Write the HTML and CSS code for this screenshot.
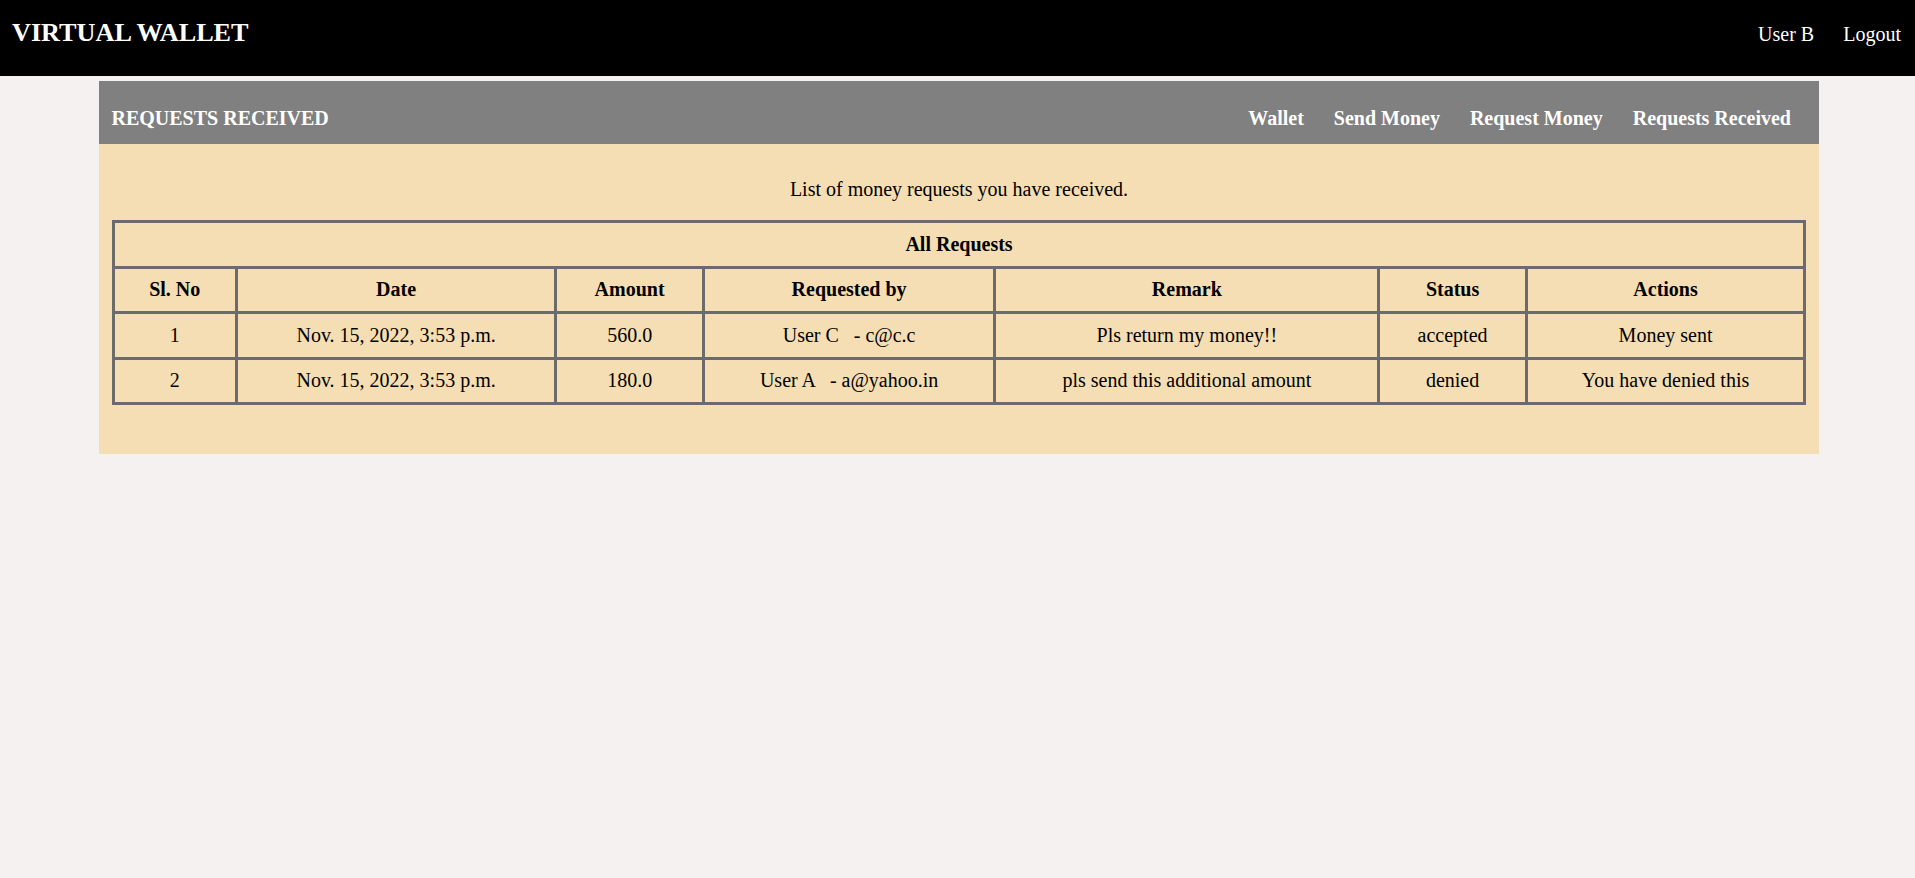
FILE: index.html
```html
<!DOCTYPE html>
<html lang="en">
<head>
<meta charset="utf-8">
<title>Virtual Wallet - Requests Received</title>
<link rel="stylesheet" href="styles.css">
</head>
<body>
<header class="topbar">
  <div class="brand">VIRTUAL WALLET</div>
  <nav class="user-nav">
    <a class="user-link" href="#">User B</a>
    <a class="user-link" href="#">Logout</a>
  </nav>
</header>
<main class="panel">
  <div class="panel-bar">
    <div class="panel-title">REQUESTS RECEIVED</div>
    <nav class="panel-nav">
      <a class="panel-link" href="#">Wallet</a>
      <a class="panel-link" href="#">Send Money</a>
      <a class="panel-link" href="#">Request Money</a>
      <a class="panel-link" href="#">Requests Received</a>
    </nav>
  </div>
  <div class="panel-body">
    <p class="intro">List of money requests you have received.</p>
    <table class="req-table">
      <colgroup>
        <col class="c-sl">
        <col class="c-date">
        <col class="c-amt">
        <col class="c-by">
        <col class="c-remark">
        <col class="c-status">
        <col class="c-actions">
      </colgroup>
      <thead>
        <tr><th colspan="7">All Requests</th></tr>
        <tr>
          <th>Sl. No</th>
          <th>Date</th>
          <th>Amount</th>
          <th>Requested by</th>
          <th>Remark</th>
          <th>Status</th>
          <th>Actions</th>
        </tr>
      </thead>
      <tbody>
        <tr>
          <td>1</td>
          <td>Nov. 15, 2022, 3:53 p.m.</td>
          <td>560.0</td>
          <td>User C &nbsp; - c@c.c</td>
          <td>Pls return my money!!</td>
          <td>accepted</td>
          <td>Money sent</td>
        </tr>
        <tr>
          <td>2</td>
          <td>Nov. 15, 2022, 3:53 p.m.</td>
          <td>180.0</td>
          <td>User A &nbsp; - a@yahoo.in</td>
          <td>pls send this additional amount</td>
          <td>denied</td>
          <td>You have denied this</td>
        </tr>
      </tbody>
    </table>
  </div>
</main>
</body>
</html>
```
FILE: styles.css
```css
html, body {
  margin: 0;
  padding: 0;
}

body {
  background: #f4f1f0;
  font-family: "Liberation Serif", "Times New Roman", serif;
  font-size: 20px;
  color: #000;
}

a {
  color: inherit;
  text-decoration: none;
}

.topbar {
  box-sizing: border-box;
  height: 76px;
  background: #000;
  color: #fff;
  display: flex;
  align-items: baseline;
  justify-content: space-between;
  padding: 18px 14px 0 12px;
}

.brand {
  font-size: 26.2px;
  font-weight: bold;
}

.user-nav {
  display: flex;
  gap: 29px;
}

.panel {
  width: 1720px;
  margin: 5px 0 0 99px;
}

.panel-bar {
  background: #808080;
  color: #fff;
  font-weight: bold;
  line-height: 23px;
  height: 63px;
  box-sizing: border-box;
  padding: 26px 28px 14px 12.5px;
  display: flex;
  justify-content: space-between;
}

.panel-nav {
  display: flex;
  gap: 30px;
}

.panel-body {
  background: #f5deb3;
  padding: 34px 12.7px 48.5px;
}

.intro {
  margin: 0 0 19px;
  text-align: center;
  line-height: 23px;
}

.req-table {
  width: 100%;
  border-collapse: collapse;
  table-layout: fixed;
  border: 3px solid #6b6b6b;
}

.req-table th,
.req-table td {
  border: 3px solid #6b6b6b;
  padding: 9.75px 4px;
  line-height: 23px;
  text-align: center;
  font-weight: normal;
}

.req-table th {
  font-weight: bold;
}

.c-sl { width: 7.28%; }
.c-date { width: 18.89%; }
.c-amt { width: 8.72%; }
.c-by { width: 17.23%; }
.c-remark { width: 22.70%; }
.c-status { width: 8.72%; }
.c-actions { width: 16.46%; }
```
